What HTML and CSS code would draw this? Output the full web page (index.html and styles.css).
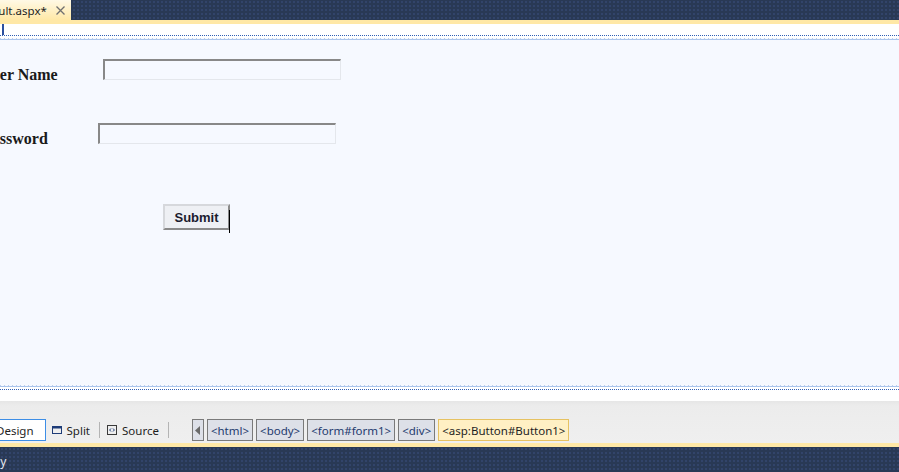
FILE: index.html
```html
<!DOCTYPE html>
<html>
    <head>
        <title>Default.aspx - Design</title>
        <link rel="stylesheet" href="styles.css">
    </head>
    <body>
        <div class="ide">
            <div class="doc-tabs">
                <div class="tab active">
                    <span class="tab-name">Default.aspx*</span>
                    <svg class="tab-close" width="9" height="9" viewBox="0 0 9 9">
                        <path d="M0.5 0.5 L8.5 8.5 M8.5 0.5 L0.5 8.5" stroke="#707070" stroke-width="1.3"/>
                    </svg>
                </div>
            </div>
            <div class="accent-strip"></div>

            <div class="design-head">
                <div class="caret-mark"></div>
            </div>
            <div class="rule-dotted"></div>
            <div class="rule-gap"></div>
            <div class="rule-ticks"></div>
            <div class="rule-solid"></div>

            <div class="design-surface">
                <div class="login-form">
                    <div class="field-row row-user">
                        <label class="field-label">User Name</label>
                        <input class="field-input input-user" type="text">
                    </div>
                    <div class="field-row row-pass">
                        <label class="field-label">Password</label>
                        <input class="field-input input-pass" type="password">
                    </div>
                    <div class="submit-row">
                        <button class="submit-btn">Submit</button>
                        <span class="text-caret"></span>
                    </div>
                </div>
            </div>

            <div class="rule-ticks"></div>
            <div class="rule-solid"></div>
            <div class="rule-gap"></div>
            <div class="rule-dotted"></div>
            <div class="design-foot"></div>

            <div class="view-bar">
                <div class="view-btn selected">Design</div>
                <div class="view-btn">
                    <svg class="view-icon" width="10" height="8" viewBox="0 0 10 8">
                        <rect x="0.5" y="0.5" width="9" height="7" fill="none" stroke="#1e3c78"/>
                        <rect x="0.5" y="0.5" width="9" height="2" fill="#1e3c78"/>
                    </svg>
                    Split
                </div>
                <div class="bar-sep"></div>
                <div class="view-btn">
                    <svg class="view-icon" width="10" height="10" viewBox="0 0 10 10">
                        <rect x="0.5" y="0.5" width="9" height="9" fill="none" stroke="#3a3a3a"/>
                        <path d="M4 3.5 L2.6 5 L4 6.5 M6 3.5 L7.4 5 L6 6.5" fill="none" stroke="#1e3c78"/>
                    </svg>
                    Source
                </div>
                <div class="bar-sep"></div>

                <div class="crumbs">
                    <div class="crumb crumb-arrow">
                        <svg width="5" height="9" viewBox="0 0 5 9"><path d="M5 0 L0 4.5 L5 9 Z" fill="#6a6a6a"/></svg>
                    </div>
                    <div class="crumb">&lt;html&gt;</div>
                    <div class="crumb">&lt;body&gt;</div>
                    <div class="crumb">&lt;form#form1&gt;</div>
                    <div class="crumb">&lt;div&gt;</div>
                    <div class="crumb current">&lt;asp:Button#Button1&gt;</div>
                </div>
            </div>
            <div class="accent-strip"></div>

            <div class="status-bar">
                <span class="status-text">Ready</span>
            </div>
        </div>
    </body>
</html>
```

FILE: styles.css
```css
:root {
    --shell: #293955;
    --accent: #ffe8a6;
    --surface: #f6f9ff;
    --ui-font: "Segoe UI", "Noto Sans", "Liberation Sans", sans-serif;
}
body {
    margin: 0;
    overflow: hidden;
}
.ide {
    width: 899px;
    height: 472px;
    overflow: hidden;
    display: flex;
    flex-direction: column;
    font-family: var(--ui-font);
}

/* document tabs */
.doc-tabs {
    height: 20px;
    flex: none;
    display: flex;
    background-color: var(--shell);
    background-image: radial-gradient(#32446a 0.8px, transparent 1px);
    background-size: 4px 4px;
}
.tab {
    width: 71px;
    height: 20px;
    display: flex;
    align-items: center;
    background: linear-gradient(#fff9e6, #ffe8a6);
    overflow: hidden;
}
.tab-name {
    margin-left: -27px;
    font-size: 11.5px;
    color: #1e1e1e;
    white-space: nowrap;
}
.tab-close {
    flex: none;
    margin-left: 9px;
    margin-top: 1px;
}
.accent-strip {
    height: 4px;
    flex: none;
    background-color: var(--accent);
}

/* design view rulers */
.design-head {
    height: 11px;
    flex: none;
    background: #fff;
}
.caret-mark {
    width: 2px;
    height: 11px;
    margin-left: 2px;
    background-color: #2b4f9e;
}
.rule-dotted {
    height: 1px;
    flex: none;
    background: #fff repeating-linear-gradient(90deg, #2f5eb4 0 1px, transparent 1px 2px);
}
.rule-gap {
    height: 2px;
    flex: none;
    background: #fff;
}
.rule-ticks {
    height: 1px;
    flex: none;
    background: var(--surface) repeating-linear-gradient(90deg, #bfcfea 0 1px, transparent 1px 4px);
}
.rule-solid {
    height: 1px;
    flex: none;
    background-color: #a9c4ec;
}
.design-foot {
    height: 11px;
    flex: none;
    background: #fff;
}

/* form on the design surface */
.design-surface {
    height: 345px;
    flex: none;
    background-color: var(--surface);
}
.login-form {
    margin-left: -18px;
    padding-top: 19px;
    font-family: "Liberation Serif", "Times New Roman", serif;
}
.field-row {
    display: flex;
    align-items: flex-start;
    height: 21px;
}
.row-pass {
    margin-top: 43px;
}
.field-label {
    margin-top: 7px;
    font-size: 16px;
    font-weight: bold;
    color: #1a1a1a;
    white-space: nowrap;
}
.field-input {
    width: 238px;
    height: 21px;
    box-sizing: border-box;
    padding: 0;
    background: transparent;
    border-style: solid;
    border-width: 2px 1px 1px 2px;
    border-color: #888 #e4e7ec #e4e7ec #888;
}
.input-user {
    margin-left: 45px;
}
.input-pass {
    margin-left: 50px;
}
.submit-row {
    display: flex;
    margin-top: 60px;
    margin-left: 181px;
}
.submit-btn {
    width: 67px;
    height: 26px;
    padding: 0;
    font-family: "Liberation Sans", Arial, sans-serif;
    font-size: 13px;
    font-weight: bold;
    color: #1b1b2e;
    background-color: #eef0f4;
    border-style: solid;
    border-width: 2px;
    border-color: #d6d8dc #8a8a8a #8a8a8a #d6d8dc;
}
.text-caret {
    width: 1px;
    height: 23px;
    margin-top: 6px;
    margin-left: -1px;
    background-color: #000;
}

/* view switcher + tag path */
.view-bar {
    height: 42px;
    flex: none;
    box-sizing: border-box;
    padding-top: 18px;
    display: flex;
    align-items: flex-start;
    background: linear-gradient(#e6e6e6, #ececec 5px, #efefef);
    font-size: 11.5px;
    color: #1e1e1e;
}
.view-btn {
    height: 22px;
    box-sizing: border-box;
    display: flex;
    align-items: center;
    gap: 5px;
    margin-left: 6px;
    white-space: nowrap;
}
.view-btn.selected {
    margin-left: -11px;
    padding: 0 11px 0 6px;
    background-color: #fff;
    border: 1px solid #3d8ee6;
}
.bar-sep + .view-btn {
    margin-left: 7px;
}
.view-icon {
    flex: none;
}
.bar-sep {
    width: 1px;
    height: 16px;
    margin: 3px 0 0 9px;
    background-color: #b4b4b4;
}
.crumbs {
    display: flex;
    gap: 3px;
    margin-left: 23px;
}
.crumb {
    height: 22px;
    box-sizing: border-box;
    display: flex;
    align-items: center;
    padding: 0 3px;
    border: 1px solid #7a7a7a;
    background-color: #dde0e8;
    color: #1e3a6e;
    white-space: nowrap;
}
.crumb-arrow {
    width: 12px;
    justify-content: center;
    padding: 0;
}
.crumb.current {
    background-color: #fff0c4;
    border-color: #e6c262;
    color: #1e1e1e;
}

/* status bar */
.status-bar {
    flex: 1;
    display: flex;
    align-items: center;
    background-color: var(--shell);
    background-image: radial-gradient(#32446a 0.8px, transparent 1px);
    background-size: 4px 4px;
}
.status-text {
    margin-left: -28px;
    margin-top: 4px;
    font-size: 12px;
    color: #e4e8f0;
}
```
